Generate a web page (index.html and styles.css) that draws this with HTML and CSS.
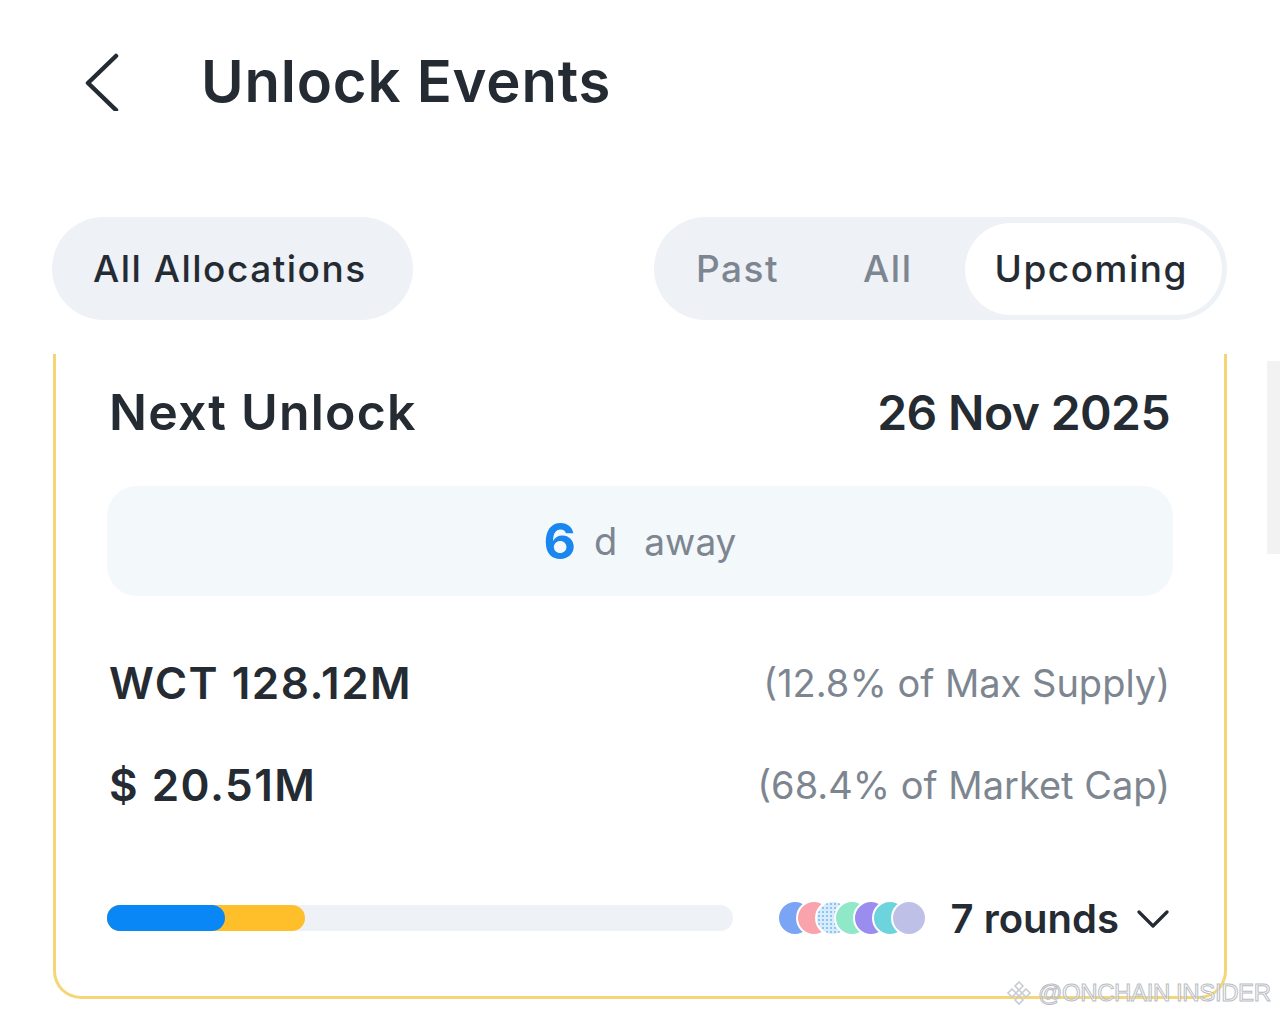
FILE: index.html
```html
<!DOCTYPE html>
<html>
<head>
<meta charset="utf-8">
<link rel="stylesheet" href="styles.css">
</head>
<body>
<div class="page">
  <header class="header">
    <svg class="back" width="40" height="60" viewBox="0 0 40 60"><path d="M33 5 L5 32 L33 59" fill="none" stroke="#252b33" stroke-width="4.5" stroke-linecap="round" stroke-linejoin="round"/></svg>
    <h1 class="title">Unlock Events</h1>
  </header>
  <div class="tabs">
    <div class="pill">All Allocations</div>
    <div class="segment">
      <span class="seg">Past</span>
      <span class="seg">All</span>
      <span class="seg active">Upcoming</span>
    </div>
  </div>
  <div class="scroll">
    <div class="card">
      <div class="row next">
        <span class="label">Next Unlock</span>
        <span class="label date">26 Nov 2025</span>
      </div>
      <div class="countdown"><span class="num">6</span><span class="unit">d</span><span class="away">away</span></div>
      <div class="row stat">
        <span class="value">WCT 128.12M</span>
        <span class="note">(12.8% of Max Supply)</span>
      </div>
      <div class="row stat stat2">
        <span class="value">$ 20.51M</span>
        <span class="note">(68.4% of Market Cap)</span>
      </div>
      <div class="row bottom">
        <div class="bar">
          <div class="seg-yellow" style="width:198px"></div>
          <div class="seg-blue" style="width:118px"></div>
        </div>
        <div class="rounds">
          <div class="dots">
            <span class="dot d1"></span><span class="dot d2"></span><span class="dot d3"></span><span class="dot d4"></span><span class="dot d5"></span><span class="dot d6"></span><span class="dot d7"></span>
          </div>
          <span class="rounds-text">7 rounds</span>
          <svg class="chev" width="32" height="20" viewBox="0 0 32 20"><path d="M2 3 L16 17 L30 3" fill="none" stroke="#252b33" stroke-width="3.2" stroke-linecap="round" stroke-linejoin="round"/></svg>
        </div>
      </div>
    </div>
  </div>
  <div class="scrollbar"></div>
  <div class="watermark">
    <svg width="26" height="26" viewBox="0 0 26 26"><g fill="none" stroke="#c9ccd1" stroke-width="1.6"><path d="M13 2 L17 6 L13 10 L9 6 Z"/><path d="M6 9 L10 13 L6 17 L2 13 Z"/><path d="M20 9 L24 13 L20 17 L16 13 Z"/><path d="M13 16 L17 20 L13 24 L9 20 Z"/><path d="M13 10 L16 13 L13 16 L10 13 Z"/></g></svg>
    <span class="wm-text">@ONCHAIN INSIDER</span>
  </div>
</div>
</body>
</html>
```
FILE: styles.css
```css
* { box-sizing: border-box; }
html, body { margin: 0; padding: 0; background: #ffffff; }
body { font-family: Inter, "Noto Sans", sans-serif; color: #252b33; overflow: hidden; }
.page { position: relative; width: 1280px; height: 1019px; }

.header { display: flex; align-items: center; height: 82px; padding: 40px 0 0 83px; box-sizing: content-box; }
.back { flex: none; }
.title { margin: 0 0 0 78px; font-size: 58px; font-weight: 600; letter-spacing: 0.8px; line-height: 82px; }

.tabs { display: flex; justify-content: space-between; margin: 95px 53px 0 52px; }
.pill { height: 103px; width: 361px; border-radius: 52px; background: #eef1f5; display: flex; align-items: center; padding-left: 41px; font-size: 37px; font-weight: 500; letter-spacing: 1.5px; }
.segment { height: 103px; width: 573px; border-radius: 52px; background: #eef1f5; display: flex; align-items: center; padding: 0 5px 0 42px; }
.seg { font-size: 37px; font-weight: 500; color: #7d8690; margin-right: 84px; letter-spacing: 1.5px; }
.seg:nth-child(2) { margin-right: 52px; }
.seg.active { margin: 0 0 0 auto; color: #252b33; background: #ffffff; height: 92px; width: 262px; border-radius: 46px; display: flex; align-items: center; justify-content: center; padding-right: 4px; }

.scroll { margin-top: 34px; }
.card { margin: 0 53px; border: 3px solid #f4d676; border-top: none; border-radius: 0 0 28px 28px; padding: 24px 51px 58px; }
.row { display: flex; justify-content: space-between; align-items: center; }
.next { height: 68px; padding: 0 3px 0 2px; }
.label { font-size: 50px; font-weight: 600; letter-spacing: 1.2px; }
.label.date { letter-spacing: -0.6px; font-size: 48px; }
.countdown { margin-top: 40px; height: 110px; border-radius: 30px; background: #f3f8fb; display: flex; align-items: center; justify-content: center; color: #7d8690; }
.num { font-size: 50px; font-weight: 700; color: #1a86f0; margin-right: 18px; }
.unit { font-size: 38px; margin-right: 27px; }
.away { font-size: 37px; }
.stat { height: 60px; margin-top: 57px; padding: 0 3px 0 2px; }
.stat2 { margin-top: 42px; }
.value { font-size: 44px; font-weight: 600; letter-spacing: 1.5px; }
.note { font-size: 38px; color: #7d8690; }
.bottom { height: 40px; margin-top: 83px; }
.bar { position: relative; width: 626px; height: 26px; border-radius: 13px; background: #eef1f5; }
.seg-blue, .seg-yellow { position: absolute; left: 0; top: 0; height: 26px; border-radius: 13px; }
.seg-blue { background: #0a87f7; }
.seg-yellow { background: #ffbf2a; }
.rounds { display: flex; align-items: center; padding-right: 4px; }
.dots { display: flex; margin-right: 24px; }
.dot { width: 36px; height: 36px; border-radius: 50%; border: 2px solid #ffffff; margin-left: -17px; }
.dot.d1 { margin-left: 0; background: #79a5f4; }
.d2 { background: #f9a3ad; }
.d3 { background: radial-gradient(circle, #8cc4f5 1px, #d8ecfc 1.5px) 0 0 / 4px 4px; }
.d4 { background: #8fe8c8; }
.d5 { background: #9b8cf0; }
.d6 { background: #6dd3dd; }
.d7 { background: #bfc0e8; }
.rounds-text { font-size: 40px; font-weight: 600; margin-right: 18px; }
.chev { margin-top: 2px; }

.scrollbar { position: absolute; left: 1267px; top: 361px; width: 13px; height: 193px; background: #f2f2f2; }
.watermark { position: absolute; left: 1006px; top: 979px; display: flex; align-items: center; gap: 6px; white-space: nowrap; }
.wm-text { font-family: "Liberation Sans", sans-serif; font-size: 24px; color: rgba(255,255,255,0.6); -webkit-text-stroke: 1px #b9bdc3; letter-spacing: -0.4px; }
```
